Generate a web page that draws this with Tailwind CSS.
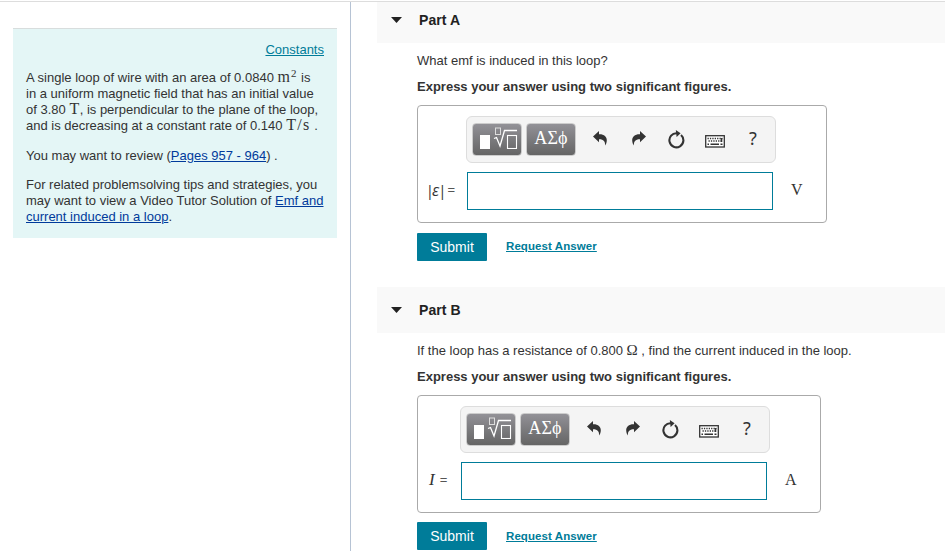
<!DOCTYPE html>
<html lang="en">
<head>
<meta charset="utf-8">
<title>Induced emf</title>
<script src="https://cdn.jsdelivr.net/npm/@tailwindcss/browser@4"></script>
</head>
<body class="h-[551px] w-[945px] overflow-hidden bg-white pt-px text-[13px] leading-4 text-[#333] font-['Liberation_Sans',Arial,sans-serif]">
<svg class="hidden">
  <symbol id="template" viewBox="0 0 38 22">
    <rect x="0" y="8" width="10" height="14" fill="#fff"/>
    <rect x="15.500" y="1" width="5" height="6.500" fill="none" stroke="#ddd" stroke-width="1"/>
    <path d="M14 11.500l2.500-1 3.500 8.500 4.500-15.500H37" fill="none" stroke="#fff" stroke-width="1.300"/>
    <rect x="27.500" y="8.500" width="9" height="13" fill="none" stroke="#fff" stroke-width="1.100"/>
  </symbol>
  <symbol id="undo" viewBox="0 0 14 15">
    <path d="M0 5.500L6 0V3.200C11 3 14 5.800 13.800 9.500C13.700 11.800 13 13.500 12 14.500C12.400 10.500 10.500 8.200 6 8.300V11.300Z" fill="#333"/>
  </symbol>
  <symbol id="reset" viewBox="0 0 17 19">
    <path d="M13 5A7 7 0 1 1 9 3.300" fill="none" stroke="#333" stroke-width="2.100"/>
    <path d="M7.800 0L12.600 3.200L8.600 7Z" fill="#333"/>
  </symbol>
  <symbol id="keyboard" viewBox="0 0 20 13">
    <rect x="0.700" y="0.700" width="18.600" height="11.300" fill="#fff" stroke="#333" stroke-width="1.300"/>
    <path d="M2.500 3.500H17.500M3.500 6H17" stroke="#333" stroke-width="1.500" stroke-dasharray="1.300 1.100"/>
    <path d="M2.500 9.300H4M5.500 9.300H14M15.500 9.300H17.500M16.500 3V7" stroke="#333" stroke-width="1.600"/>
  </symbol>
</svg>
<div class="flex h-[550px] border-t border-[#ddd]">
  <aside class="w-[351px] shrink-0 border-r border-[#b6c3d4] pt-[26px] pl-[13px]">
    <div class="h-[210px] w-[324px] border-t border-[#d8dddd] bg-[#e4f6f6] pl-[13px]">
      <div class="pt-[13px] pr-[13px] text-right text-[#007c99] underline">Constants</div>
      <div class="mt-3 whitespace-nowrap">
        <div class="h-4">A single loop of wire with an area of 0.0840 <span class="font-['Liberation_Serif',serif] text-[16px] leading-[0]">m<sup class="ml-px text-[11px] leading-[0]">2</sup></span><span class="ml-px"> is</span></div>
        <div class="h-4">in a uniform magnetic field that has an initial value</div>
        <div class="h-4">of 3.80 <span class="font-['Liberation_Serif',serif] text-[16px] leading-[0] tracking-[0.5px]">T</span>, is perpendicular to the plane of the loop,</div>
        <div class="h-4">and is decreasing at a constant rate of 0.140 <span class="font-['Liberation_Serif',serif] text-[16px] leading-[0] tracking-[1.300px]">T/s</span> .</div>
      </div>
      <p class="mt-[14px]">You may want to review (<a class="text-[#003a9b] underline">Pages 957 - 964</a>) .</p>
      <p class="mt-[13px] whitespace-nowrap">For related problemsolving tips and strategies, you<br>may want to view a Video Tutor Solution of <a class="text-[#003a9b] underline">Emf and<br>current induced in a loop</a>.</p>
    </div>
  </aside>
  <main class="flex-1 pl-[26px]">
    <section class="h-[285px]">
      <header class="flex h-[41px] items-center bg-[#f9f9f9] pb-[5px] pl-[14px]">
        <svg class="h-[6px] w-[11px]" viewBox="0 0 11 6"><path d="M0 0H11L5.500 6Z" fill="#222"/></svg>
        <h2 class="ml-[17px] text-[14px] font-bold tracking-[0.1px] text-[#222]">Part A</h2>
      </header>
      <div class="pl-10">
        <p class="mt-[10px]">What emf is induced in this loop?</p>
        <p class="mt-[10px] font-bold">Express your answer using two significant figures.</p>
        <div class="mt-[10px] h-[118px] w-[410px] rounded border border-[#aaa] pt-[10px]">
          <div class="ml-[48px] flex h-[47px] w-[310px] rounded-md border border-[#ddd] bg-[#f4f4f4] pt-[6px] pl-[5px]">
            <div class="flex h-[33px] w-[50px] rounded border border-[#ccc] bg-linear-to-b from-[#929197] to-[#656565] pt-[3px]"><svg class="ml-[7px] h-[22px] w-[38px]"><use href="#template"/></svg></div>
            <div class="ml-1 h-[33px] w-[50px] rounded border border-[#ccc] bg-linear-to-b from-[#929197] to-[#656565] pt-[5px] text-center text-[18px] leading-[19px] tracking-[0.2px] text-white font-['Liberation_Serif',serif]">ΑΣϕ</div>
            <svg class="mt-[8px] ml-[17px] h-[15px] w-[14px]"><use href="#undo"/></svg>
            <svg class="mt-[8px] ml-[25px] h-[15px] w-[14px] -scale-x-100"><use href="#undo"/></svg>
            <svg class="mt-[7px] ml-[22px] h-[19px] w-[17px]"><use href="#reset"/></svg>
            <svg class="mt-[12px] ml-[20px] h-[13px] w-[20px]"><use href="#keyboard"/></svg>
            <div class="mt-[4px] ml-[24px] text-[18px] leading-[23px] font-['Noto_Sans',sans-serif]">?</div>
          </div>
          <div class="mt-[9px] flex">
            <div class="flex w-[49px] pt-[9px] pl-[8px] leading-[18px]"><span class="text-[14px] tracking-[-1.700px] font-['Noto_Sans',sans-serif]">|<i class="mr-px text-[16px] font-['Open_Sans',sans-serif]">ε</i>|</span><span class="ml-[3px] text-[#555]">=</span></div>
            <div class="h-[38px] w-[306px] border border-[#007c99] bg-white"></div>
            <div class="pt-[10px] pl-[18px] text-[16px] font-['Liberation_Serif',serif]">V</div>
          </div>
        </div>
        <div class="mt-[10px] flex">
          <div class="h-7 w-[70px] rounded-[1px] bg-[#007c99] text-center text-[14px] leading-7 text-white">Submit</div>
          <a class="ml-[19px] text-[11.500px] leading-[26px] font-bold tracking-[0.08px] text-[#007c99] underline">Request Answer</a>
        </div>
      </div>
    </section>
    <section>
      <header class="flex h-[46px] items-center bg-[#f9f9f9] pl-[14px]">
        <svg class="h-[6px] w-[11px]" viewBox="0 0 11 6"><path d="M0 0H11L5.500 6Z" fill="#222"/></svg>
        <h2 class="ml-[17px] text-[14px] font-bold tracking-[0.1px] text-[#222]">Part B</h2>
      </header>
      <div class="pl-10">
        <p class="mt-[10px]">If the loop has a resistance of 0.800 <span class="font-['Liberation_Serif',serif] text-[15px] leading-[0]">Ω</span> , find the current induced in the loop.</p>
        <p class="mt-[10px] font-bold">Express your answer using two significant figures.</p>
        <div class="mt-[10px] h-[118px] w-[404px] rounded border border-[#aaa] pt-[10px]">
          <div class="ml-[42px] flex h-[47px] w-[310px] rounded-md border border-[#ddd] bg-[#f4f4f4] pt-[6px] pl-[5px]">
            <div class="flex h-[33px] w-[50px] rounded border border-[#ccc] bg-linear-to-b from-[#929197] to-[#656565] pt-[3px]"><svg class="ml-[7px] h-[22px] w-[38px]"><use href="#template"/></svg></div>
            <div class="ml-1 h-[33px] w-[50px] rounded border border-[#ccc] bg-linear-to-b from-[#929197] to-[#656565] pt-[5px] text-center text-[18px] leading-[19px] tracking-[0.2px] text-white font-['Liberation_Serif',serif]">ΑΣϕ</div>
            <svg class="mt-[8px] ml-[17px] h-[15px] w-[14px]"><use href="#undo"/></svg>
            <svg class="mt-[8px] ml-[25px] h-[15px] w-[14px] -scale-x-100"><use href="#undo"/></svg>
            <svg class="mt-[7px] ml-[22px] h-[19px] w-[17px]"><use href="#reset"/></svg>
            <svg class="mt-[12px] ml-[20px] h-[13px] w-[20px]"><use href="#keyboard"/></svg>
            <div class="mt-[4px] ml-[24px] text-[18px] leading-[23px] font-['Noto_Sans',sans-serif]">?</div>
          </div>
          <div class="mt-[9px] flex">
            <div class="flex w-[43px] pt-[9px] pl-[11px] leading-[18px]"><i class="text-[17px] font-['Liberation_Serif',serif]">I</i><span class="ml-[5px] text-[#555]">=</span></div>
            <div class="h-[38px] w-[306px] border border-[#007c99] bg-white"></div>
            <div class="pt-[10px] pl-[18px] text-[16px] font-['Liberation_Serif',serif]">A</div>
          </div>
        </div>
        <div class="mt-[9px] flex">
          <div class="h-7 w-[70px] rounded-[1px] bg-[#007c99] text-center text-[14px] leading-7 text-white">Submit</div>
          <a class="ml-[19px] text-[11.500px] leading-7 font-bold tracking-[0.08px] text-[#007c99] underline">Request Answer</a>
        </div>
      </div>
    </section>
  </main>
</div>
</body>
</html>
